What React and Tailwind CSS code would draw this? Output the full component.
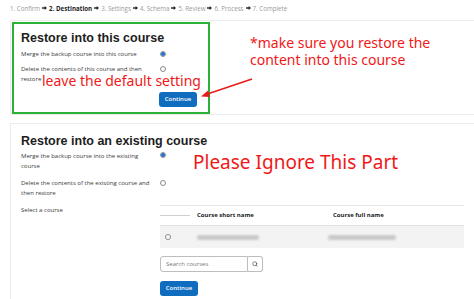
import { Search } from "lucide-react"

const Arrow = () => (
  <svg width="5" height="4" viewBox="0 0 5 4" className="inline-block mx-[2px] align-middle">
    <rect x="0" y="1.3" width="3" height="1.4" fill="#222" />
    <path d="M2.6 0 L5 2 L2.6 4 Z" fill="#222" />
  </svg>
)

const Radio = ({ checked }) => (
  <span className="w-[6px] h-[6px] rounded-full border border-[#8a8a8a] flex items-center justify-center bg-white">
    {checked && <span className="w-[4px] h-[4px] rounded-full bg-[#1f6fd0]" />}
  </span>
)

const Blur = ({ w }) => (
  <div className="h-[5px] bg-[#c9c9c9] blur-[1px] rounded-sm" style={{ width: w }} />
)

export default function App() {
  const steps = ["1. Confirm", "2. Destination", "3. Settings", "4. Schema", "5. Review", "6. Process", "7. Complete"]

  return (
    <div className="relative w-[474px] h-[299px] overflow-hidden bg-white text-[#3a3a3a] font-['Open_Sans',_'Liberation_Sans',_sans-serif]">
      {/* steps */}
      <div className="h-[20px] pl-[10px] pb-[3px] text-[6.2px] text-[#9a9a9a] flex items-center">
        {steps.map((s, i) => (
          <span key={s} className="flex items-center">
            <span className={i === 1 ? "font-bold text-[#222]" : ""}>{s}</span>
            {i < steps.length - 1 && <Arrow />}
          </span>
        ))}
      </div>

      {/* restore into this course */}
      <div className="ml-[10px] h-[95px] border-t border-l border-b border-[#ececec]">
        <div className="ml-[1px] mt-[1px] w-[198px] h-[92px] border-2 border-[#2bb135] pl-[7px] pr-[10px]">
          <div className="mt-[6px] text-[12.5px] font-bold text-[#1d1d1d] leading-[16px] font-['Liberation_Sans',_sans-serif]">Restore into this course</div>
          <div className="flex items-start mt-[3px] text-[6px] leading-[9px]">
            <div className="w-[134px] mr-[5px] mt-[1px]">Merge the backup course into this course</div>
            <div className="mt-[2px]"><Radio checked /></div>
          </div>
          <div className="flex items-start mt-[5px] text-[6px] leading-[10px]">
            <div className="w-[134px] mr-[5px]">Delete the contents of this course and then restore</div>
            <div className="mt-[2px]"><Radio /></div>
          </div>
          <div className="mt-[8px] ml-[138px] w-[38px] h-[15px] rounded-[3px] bg-[#0f6cbf] text-white text-[6px] font-semibold flex items-center justify-center">
            Continue
          </div>
        </div>
      </div>

      {/* restore into an existing course */}
      <div className="ml-[10px] mt-[8px] h-[200px] border-t border-l border-[#ececec] pl-[10px]">
        <div className="mt-[9px] text-[12.5px] font-bold text-[#1d1d1d] leading-[16px] font-['Liberation_Sans',_sans-serif]">Restore into an existing course</div>
        <div className="flex items-start mt-[2px] text-[6px] leading-[10px]">
          <div className="w-[134px] mr-[5px]">Merge the backup course into the existing course</div>
          <div className="mt-[1px]"><Radio checked /></div>
        </div>
        <div className="flex items-start mt-[7px] text-[6px] leading-[10px]">
          <div className="w-[134px] mr-[5px]">Delete the contents of the existing course and then restore</div>
          <div className="mt-[2px]"><Radio /></div>
        </div>
        <div className="flex mt-[7px]">
          <div className="w-[139px] text-[6px] pt-[1px]">Select a course</div>
          <div className="w-[304px]">
            <div className="border-t border-[#e6e6e6] h-[20px] flex items-center text-[6px] font-bold text-[#222]">
              <div className="w-[37px] self-stretch flex items-center"><div className="w-[30px] border-t border-[#cfcfcf]" /></div>
              <div className="w-[136px]">Course short name</div>
              <div>Course full name</div>
            </div>
            <div className="h-[23px] bg-[#f3f3f3] border-t border-[#e0e0e0] flex items-center">
              <div className="w-[37px] pl-[5px]"><Radio /></div>
              <div className="w-[131px]"><Blur w={62} /></div>
              <Blur w={68} />
            </div>
            <div className="mt-[8px] flex">
              <div className="w-[88px] h-[16px] border border-[#bdbdbd] rounded-l-[3px] text-[6px] text-[#777] pl-[5px] flex items-center">Search courses</div>
              <div className="w-[15px] h-[16px] border border-l-0 border-[#bdbdbd] rounded-r-[3px] flex items-center justify-center">
                <Search size={6} strokeWidth={2.5} className="text-[#444]" />
              </div>
            </div>
            <div className="mt-[9px] w-[38px] h-[15px] rounded-[3px] bg-[#0f6cbf] text-white text-[6px] font-semibold flex items-center justify-center">
              Continue
            </div>
          </div>
        </div>
      </div>

      {/* annotations */}
      <div className="absolute left-[42px] top-[72px] text-[14px] leading-[17px] text-[#f01818] font-['Noto_Sans',_sans-serif] whitespace-nowrap">
        leave the default setting
      </div>
      <div className="absolute left-[250px] top-[34px] text-[14px] leading-[17px] text-[#f01818] font-['Noto_Sans',_sans-serif] whitespace-nowrap">
        *make sure you restore the
        <br />
        content into this course
      </div>
      <svg className="absolute left-0 top-0" width="474" height="299">
        <line x1="252" y1="79" x2="206" y2="94.5" stroke="#e51c1c" strokeWidth="1.6" />
        <path d="M201 96.5 L208 90.5 L210 97 Z" fill="#e51c1c" />
      </svg>
      <div className="absolute left-[193px] top-[149px] text-[19px] leading-[26px] text-[#f01818] font-['Noto_Sans',_sans-serif] whitespace-nowrap">
        Please Ignore This Part
      </div>
    </div>
  )
}
